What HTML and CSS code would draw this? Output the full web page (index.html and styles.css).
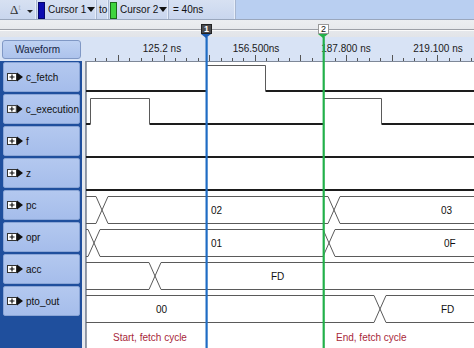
FILE: index.html
```html
<!DOCTYPE html>
<html lang="en">
<head>
  <meta charset="UTF-8" />
  <title>Waveform viewer</title>
  <link rel="stylesheet" href="styles.css">
</head>
<body>

  <svg class="defs" width="0" height="0">
    <symbol id="expand" viewBox="0 0 16 10">
      <rect x="0.5" y="1.5" width="9" height="7" fill="#fff" stroke="#333" />
      <path d="M2.5 5h5M5 2.5v5" stroke="#111" stroke-width="1.2" />
      <path d="M10 0.5l6 4.5-6 4.5z" fill="#111" />
    </symbol>
  </svg>

  <!-- cursor toolbar -->
  <header class="toolbar">
    <div class="tb-group delta">
      <span class="delta-sym">&Delta;<sup>t</sup></span>
      <span class="caret-sm"></span>
    </div>
    <div class="tb-group pick">
      <span class="swatch swatch-blue"></span>
      <span>Cursor 1</span>
      <span class="caret"></span>
    </div>
    <div class="tb-group to">to</div>
    <div class="tb-group pick">
      <span class="swatch swatch-green"></span>
      <span>Cursor 2</span>
      <span class="caret"></span>
    </div>
    <div class="tb-group diff">= 40ns</div>
    <div class="tb-fill"></div>
  </header>

  <!-- cursor markers -->
  <div class="cursor-bar">
    <div class="track"></div>
    <div class="marker marker-1" style="left: 201px">1</div>
    <div class="marker marker-2" style="left: 318px">2</div>
  </div>

  <main class="viewer">
    <div class="wave-head">
      <div class="head-btn">Waveform</div>
    </div>

    <div class="names">
      <div class="name"><svg class="exp"><use href="#expand" /></svg>c_fetch</div>
      <div class="name"><svg class="exp"><use href="#expand" /></svg>c_execution</div>
      <div class="name"><svg class="exp"><use href="#expand" /></svg>f</div>
      <div class="name"><svg class="exp"><use href="#expand" /></svg>z</div>
      <div class="name"><svg class="exp"><use href="#expand" /></svg>pc</div>
      <div class="name"><svg class="exp"><use href="#expand" /></svg>opr</div>
      <div class="name"><svg class="exp"><use href="#expand" /></svg>acc</div>
      <div class="name"><svg class="exp"><use href="#expand" /></svg>pto_out</div>
    </div>

    <div class="splitter"></div>

    <!-- ruler + traces, drawn in page coordinates -->
    <svg class="waves" width="388" height="311" viewBox="86 37 388 311">
      <rect class="ruler-bg" x="86" y="37" width="388" height="24" />
      <path class="ruler-line" d="M86 61.5H474" />
      <path class="tick" d="M95.5 58v3M106.5 58v3M129.5 58v3M141.5 58v3M152.5 58v3M175.5 58v3M186.5 58v3M198.5 58v3M221.5 58v3M232.5 58v3M243.5 58v3M266.5 58v3M278.5 58v3M289.5 58v3M312.5 58v3M323.5 58v3M335.5 58v3M357.5 58v3M369.5 58v3M380.5 58v3M403.5 58v3M414.5 58v3M426.5 58v3M449.5 58v3M460.5 58v3M471.5 58v3" />
      <path class="tick" d="M118.5 55v6M164.5 55v6M209.5 55v6M255.5 55v6M300.5 55v6M346.5 55v6M392.5 55v6M437.5 55v6" />
      <text class="ruler-label" x="162" y="52">125.2 ns</text>
      <text class="ruler-label" x="256" y="52">156.500ns</text>
      <text class="ruler-label" x="346" y="52">187.800 ns</text>
      <text class="ruler-label" x="438" y="52">219.100 ns</text>

      <path class="wave-left" d="M86.5 62V348" />

      <!-- c_fetch -->
      <path class="lo" d="M86 91H206.5M265.5 91H474" />
      <path class="hi" d="M206.5 91V65.5H265.5V91" />
      <!-- c_execution -->
      <path class="lo" d="M86 124H90.5M149.5 124H323.5M381.5 124H474" />
      <path class="hi" d="M90.5 124V98.5H149.5V124M323.5 124V98.5H381.5V124" />
      <!-- f, z -->
      <path class="lo" d="M86 157H474M86 190H474" />

      <!-- pc -->
      <path class="bus" d="M86 196.5H96L108 223.5H328L340 196.5H474M86 223.5H96L108 196.5H328L340 223.5H474" />
      <text class="val" x="211" y="214">02</text>
      <text class="val" x="441" y="214">03</text>
      <!-- opr -->
      <path class="bus" d="M86 229.5H88L100 256.5H323L335 229.5H474M86 256.5H88L100 229.5H323L335 256.5H474" />
      <text class="val" x="211" y="247">01</text>
      <text class="val" x="444" y="247">0F</text>
      <!-- acc -->
      <path class="bus" d="M86 262.5H149L161 289.5H474M86 289.5H149L161 262.5H474" />
      <text class="val" x="271" y="280">FD</text>
      <!-- pto_out -->
      <path class="bus" d="M86 295.5H374L386 322.5H474M86 322.5H374L386 295.5H474" />
      <text class="val" x="156" y="313">00</text>
      <text class="val" x="441" y="313">FD</text>

      <text class="note" x="113" y="341">Start, fetch cycle</text>
      <text class="note" x="336" y="341">End, fetch cycle</text>

      <rect class="cursor-1" x="205.5" y="37" width="2.2" height="311" />
      <rect class="cursor-2" x="322.6" y="37" width="2.2" height="311" />
    </svg>
  </main>

</body>
</html>
```

FILE: styles.css
```css
body {
  margin: 0;
  width: 474px;
  height: 348px;
  overflow: hidden;
  background: #fff;
  font-family: "Liberation Sans", Arial, sans-serif;
  font-size: 10px;
  color: #111;
}

.defs {
  position: absolute;
}

/* toolbar */

.toolbar {
  display: flex;
  height: 20px;
  box-sizing: border-box;
  border-bottom: 1px solid #9aa7bd;
  background: linear-gradient(#d7e1f2, #c9d6ee);
  white-space: nowrap;
}

.tb-group {
  display: flex;
  align-items: center;
  flex-shrink: 0;
  box-sizing: border-box;
  border-right: 1px solid #a7b6d0;
  box-shadow: inset -1px 0 0 #e6edf8;
}

.delta {
  width: 37px;
  padding-left: 10px;
  gap: 6px;
}

.delta-sym {
  font-family: "Liberation Serif", serif;
  font-size: 13px;
  color: #333;
}

.delta-sym sup {
  font-size: 8px;
  color: #aaa;
  vertical-align: 4px;
}

.caret-sm {
  width: 0;
  height: 0;
  border-left: 3px solid transparent;
  border-right: 3px solid transparent;
  border-top: 3px solid #222;
  margin-top: 3px;
}

.pick {
  width: 60px;
  padding-left: 1px;
  gap: 3px;
}

.swatch {
  width: 7px;
  height: 17px;
  box-sizing: border-box;
  align-self: flex-start;
  margin-top: 2px;
}

.swatch-blue {
  background: #0b0bb0;
  border: 1px solid #05056a;
}

.swatch-green {
  background: #3ed43e;
  border: 1px solid #1b6a1b;
}

.caret {
  width: 0;
  height: 0;
  border-left: 4px solid transparent;
  border-right: 4px solid transparent;
  border-top: 5px solid #111;
  margin-left: -2px;
}

.to {
  width: 12px;
  padding-left: 2px;
}

.diff {
  width: 67px;
  padding-left: 4px;
}

.tb-fill {
  flex: 1;
  background: #b9cff1;
}

/* cursor marker strip */

.cursor-bar {
  position: relative;
  height: 17px;
  background: linear-gradient(#eceef1, #e2e4e8);
}

.track {
  position: absolute;
  left: 0;
  right: 0;
  top: 9px;
  height: 1px;
  background: #9c9fa6;
  border-bottom: 1px solid #fafafa;
}

.marker {
  position: absolute;
  top: 4px;
  width: 11px;
  height: 10px;
  box-sizing: border-box;
  font-size: 9px;
  font-weight: bold;
  line-height: 9px;
  text-align: center;
}

.marker::after {
  content: "";
  position: absolute;
  left: -1px;
  top: 9px;
  border-left: 5.5px solid transparent;
  border-right: 5.5px solid transparent;
  border-top: 4px solid;
}

.marker-1 {
  background: #4a4b4e;
  border: 1px solid #222;
  color: #fff;
}

.marker-1::after {
  border-top-color: #1d5fb8;
}

.marker-2 {
  background: #fff;
  border: 1px solid #999;
  color: #111;
  font-weight: normal;
}

.marker-2::after {
  border-top-color: #22b04a;
}

/* viewer */

.viewer {
  display: grid;
  grid-template-columns: 82px 4px 388px;
  grid-template-rows: 24px 287px;
  background: #d8e3f5;
}

.wave-head {
  padding: 3px 1px 2px 2px;
}

.head-btn {
  height: 100%;
  box-sizing: border-box;
  display: flex;
  align-items: center;
  justify-content: center;
  padding-right: 8px;
  background: linear-gradient(#bed1f2, #adc3ec);
  border: 1px solid #8098c5;
  border-radius: 3px;
  color: #15243f;
}

.names {
  grid-row: 2;
  background: #1f4f9d;
  padding: 0 2px 0 3px;
}

.name {
  display: flex;
  align-items: center;
  height: 30px;
  margin: 1px 0 2px;
  padding-left: 3px;
  box-sizing: border-box;
  background: linear-gradient(#b3c8ef, #a5bdeb);
  border: 1px solid #8aa5d6;
  border-radius: 2px;
  color: #111;
}

.exp {
  width: 16px;
  height: 10px;
  margin-right: 3px;
}

.splitter {
  grid-row: 2;
  grid-column: 2;
  background: #e6e9ee;
  border-right: 1px solid #8a94a4;
}

.waves {
  grid-row: 1 / 3;
  grid-column: 3;
  display: block;
  background: #fff;
  font-family: "Liberation Sans", Arial, sans-serif;
}

.ruler-bg {
  fill: #d8e3f5;
}

.ruler-line {
  stroke: #7e8898;
  stroke-width: 1;
}

.tick {
  stroke: #555;
  stroke-width: 1;
}

.ruler-label {
  font-size: 10px;
  fill: #1a1a1a;
  text-anchor: middle;
}

.wave-left {
  stroke: #9aa0aa;
  stroke-width: 1;
}

.lo {
  fill: none;
  stroke: #1d1d1d;
  stroke-width: 2;
}

.hi,
.bus {
  fill: none;
  stroke: #5a5a5a;
  stroke-width: 1;
}

.val {
  font-size: 10px;
  fill: #111;
}

.note {
  font-size: 10px;
  fill: #a8283a;
}

.cursor-1 {
  fill: #1f6cc4;
}

.cursor-2 {
  fill: #22b04a;
}
```
